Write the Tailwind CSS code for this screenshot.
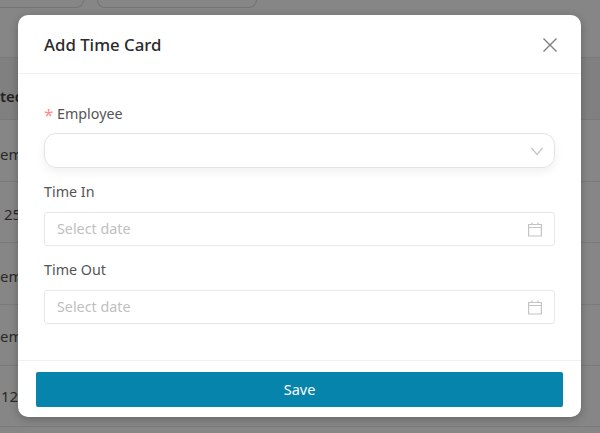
<!DOCTYPE html>
<html lang="en">
<head>
    <meta charset="UTF-8">
    <title>Add Time Card</title>
    <script src="https://cdn.jsdelivr.net/npm/@tailwindcss/browser@4"></script>
</head>
<body class="relative w-[600px] h-[433px] overflow-hidden bg-[#868686] font-['Noto_Sans','Open_Sans',sans-serif]">

    <!-- Page behind the overlay -->
    <div class="absolute inset-0 flex flex-col text-[15px] text-[#2a2a2a]">
        <div class="h-[57px] flex gap-[13px] items-start">
            <div class="ml-[-40px] w-[124px] h-[8px] border border-t-0 border-[#747474] rounded-b-[10px]"></div>
            <div class="w-[160px] h-[8px] border border-t-0 border-[#747474] rounded-b-[10px]"></div>
        </div>
        <div class="h-[63px] border-y border-[#7a7a7a] bg-[#808080] flex items-end pb-[12px] font-semibold text-[#222]">
            <span>ted</span>
        </div>
        <div class="h-[62px] border-b border-[#7a7a7a] flex items-center pt-[7px]"><span>em</span></div>
        <div class="h-[61px] border-b border-[#7a7a7a] flex items-center pt-[4px]"><span class="ml-[4px]">25</span></div>
        <div class="h-[62px] border-b border-[#7a7a7a] flex items-center pt-[6px]"><span>em</span></div>
        <div class="h-[61px] border-b border-[#7a7a7a] flex items-center pt-[2px]"><span>em</span></div>
        <div class="h-[61px] border-b border-[#7a7a7a] flex items-center"><span class="ml-[1px]">12,</span></div>
    </div>

    <!-- Modal -->
    <div class="absolute left-[18px] top-[15px] w-[563px] h-[402px] bg-white rounded-[10px] flex flex-col shadow-[0_2px_8px_rgba(0,0,0,0.25)]">
        <div class="h-[59px] shrink-0 border-b border-[#f0f0f0] pl-[26px] pr-[23px] flex items-center justify-between">
            <h1 class="text-[16.8px] font-medium text-[#2b2b2b] translate-y-[1px]">Add Time Card</h1>
            <svg class="w-[16px] h-[16px] text-[#7f7f7f] translate-y-[1px]" viewBox="0 0 16 16" fill="none" stroke="currentColor" stroke-width="1.4">
                <path d="M1.5 1.5 14.5 14.5M14.5 1.5 1.5 14.5"/>
            </svg>
        </div>

        <div class="flex-1 px-[26px] pt-[29px] text-[14.3px] text-[#555]">
            <label class="flex items-center h-[22px]">
                <span class="w-[13px] text-[17px] leading-none text-[#ff8a8a]">*</span>Employee
            </label>
            <div class="mt-[8px] h-[35px] rounded-[12px] border border-[#e3e3e3] shadow-[0_4px_10px_rgba(0,0,0,0.06)] flex items-center justify-end pr-[10px]">
                <svg class="w-[14px] h-[14px] text-[#c4c4c4]" viewBox="0 0 14 14" fill="none" stroke="currentColor" stroke-width="1.2">
                    <path d="M1.5 4 7 10.5 12.5 4"/>
                </svg>
            </div>

            <label class="flex items-center h-[22px] mt-[13px]">Time In</label>
            <div class="mt-[9px] h-[34px] rounded-[3px] border border-[#e8e8e8] flex items-center justify-between pl-[12px] pr-[12px]">
                <span class="text-[#bfbfbf]">Select date</span>
                <svg class="w-[14px] h-[15px] text-[#c4c4c4]" viewBox="0 0 14 15" fill="none" stroke="currentColor" stroke-width="1.2">
                    <path d="M.6 2.5H13.4V14H.6ZM.6 5.5H13.4M4 .5V3M10 .5V3"/>
                </svg>
            </div>

            <label class="flex items-center h-[22px] mt-[13px]">Time Out</label>
            <div class="mt-[9px] h-[34px] rounded-[3px] border border-[#e8e8e8] flex items-center justify-between pl-[12px] pr-[12px]">
                <span class="text-[#bfbfbf]">Select date</span>
                <svg class="w-[14px] h-[15px] text-[#c4c4c4]" viewBox="0 0 14 15" fill="none" stroke="currentColor" stroke-width="1.2">
                    <path d="M.6 2.5H13.4V14H.6ZM.6 5.5H13.4M4 .5V3M10 .5V3"/>
                </svg>
            </div>
        </div>

        <div class="h-[57px] shrink-0 border-t border-[#f0f0f0] px-[18px] pt-[11px]">
            <button class="w-full h-[35px] bg-[#0784ab] text-white text-[14.5px] rounded-[2px]">Save</button>
        </div>
    </div>
</body>
</html>
